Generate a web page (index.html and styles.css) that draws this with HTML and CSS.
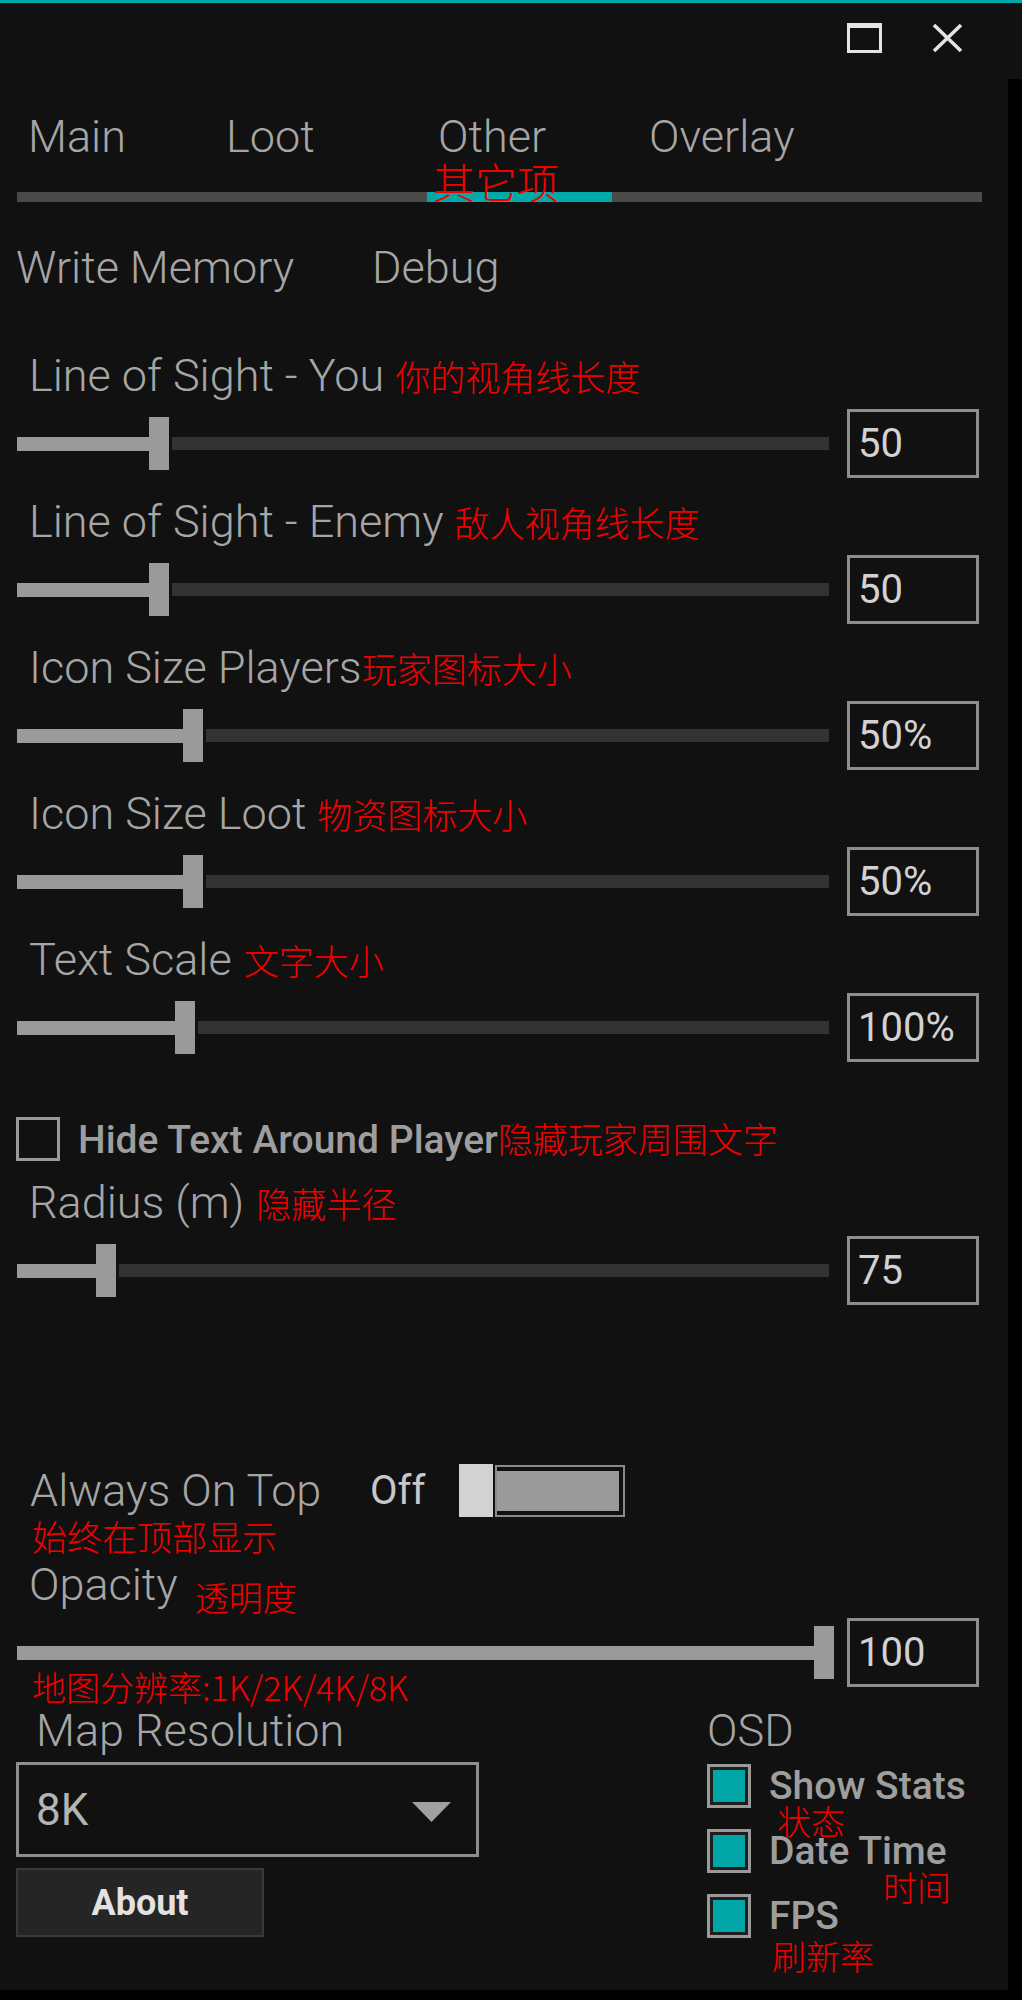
FILE: index.html
```html
<!DOCTYPE html>
<html lang="en">
<head>
<meta charset="utf-8">
<title>Settings - Other</title>
<link rel="stylesheet" href="styles.css">
</head>
<body>
<div class="titlebar">
  <div class="btn-max"></div>
  <svg class="btn-close" width="31" height="30" viewBox="0 0 31 30"><path d="M2 2 L29 28 M29 2 L2 28" stroke="#e4e4e4" stroke-width="3.6" fill="none"/></svg>
</div>
<div class="panel">
  <div class="tabs">
    <div class="tab tab-main">Main</div>
    <div class="tab tab-loot">Loot</div>
    <div class="tab tab-other">Other<span class="note note-tab">其它项</span></div>
    <div class="tab tab-overlay">Overlay</div>
  </div>
  <div class="tabtrack"><div class="tabind"></div></div>
  <div class="subtabs"><span class="subtab-write">Write Memory</span><span>Debug</span></div>

  <div class="setting first">
    <div class="label">Line of Sight - You <span class="note">你的视角线长度</span></div>
    <div class="row">
      <div class="slider"><div class="fill" style="width:132px"></div><div class="thumb"></div><div class="rest"></div></div>
      <div class="numbox">50</div>
    </div>
  </div>
  <div class="setting">
    <div class="label">Line of Sight - Enemy <span class="note">敌人视角线长度</span></div>
    <div class="row">
      <div class="slider"><div class="fill" style="width:132px"></div><div class="thumb"></div><div class="rest"></div></div>
      <div class="numbox">50</div>
    </div>
  </div>
  <div class="setting">
    <div class="label">Icon Size Players<span class="note">玩家图标大小</span></div>
    <div class="row">
      <div class="slider"><div class="fill" style="width:166px"></div><div class="thumb"></div><div class="rest"></div></div>
      <div class="numbox">50%</div>
    </div>
  </div>
  <div class="setting">
    <div class="label">Icon Size Loot <span class="note">物资图标大小</span></div>
    <div class="row">
      <div class="slider"><div class="fill" style="width:166px"></div><div class="thumb"></div><div class="rest"></div></div>
      <div class="numbox">50%</div>
    </div>
  </div>
  <div class="setting">
    <div class="label">Text Scale<span class="note gap-s">文字大小</span></div>
    <div class="row">
      <div class="slider"><div class="fill" style="width:158px"></div><div class="thumb"></div><div class="rest"></div></div>
      <div class="numbox">100%</div>
    </div>
  </div>

  <div class="checkrow">
    <div class="cb"></div>
    <div class="cb-text">Hide Text Around Player<span class="note">隐藏玩家周围文字</span></div>
  </div>
  <div class="setting radius">
    <div class="label">Radius (m)<span class="note gap-s">隐藏半径</span></div>
    <div class="row">
      <div class="slider"><div class="fill" style="width:79px"></div><div class="thumb"></div><div class="rest"></div></div>
      <div class="numbox">75</div>
    </div>
  </div>

  <div class="toprow">
    <span class="top-label">Always On Top</span>
    <span class="top-off">Off</span>
    <div class="toggle"><div class="knob"></div><div class="ttrack"><div class="tfill"></div></div></div>
  </div>
  <div class="note note-block">始终在顶部显示</div>
  <div class="setting opacity">
    <div class="label">Opacity<span class="note note-low">透明度</span></div>
    <div class="row">
      <div class="slider"><div class="fill" style="width:797px"></div><div class="thumb"></div></div>
      <div class="numbox">100</div>
    </div>
  </div>
  <div class="note note-block note-map">地图分辨率:1K/2K/4K/8K</div>

  <div class="bottom">
    <div class="col-left">
      <div class="map-label">Map Resolution</div>
      <div class="select">
        <span class="select-value">8K</span>
        <svg class="select-arrow" width="39" height="20" viewBox="0 0 39 20"><polygon points="0,0 39,0 19.5,20" fill="#a0a0a0"/></svg>
      </div>
      <div class="about">About</div>
    </div>
    <div class="col-right">
      <div class="osd-label">OSD</div>
      <div class="osd-row r1">
        <div class="cb checked"><div class="cb-fill"></div></div>
        <div class="osd-text">Show Stats</div>
        <span class="note osd-note n1">状态</span>
      </div>
      <div class="osd-row r2">
        <div class="cb checked"><div class="cb-fill"></div></div>
        <div class="osd-text">Date Time</div>
        <span class="note osd-note n2">时间</span>
      </div>
      <div class="osd-row r3">
        <div class="cb checked"><div class="cb-fill"></div></div>
        <div class="osd-text">FPS</div>
        <span class="note osd-note n3">刷新率</span>
      </div>
    </div>
  </div>
</div>
</body>
</html>
```

FILE: styles.css
```css
* { box-sizing: border-box; }
html, body { margin: 0; padding: 0; }
body {
  background: #000;
  width: 1022px;
  height: 2000px;
  overflow: hidden;
  font-family: Roboto, "Noto Sans", sans-serif;
  color: #a6a6a6;
}

.titlebar {
  height: 79px;
  background: #111;
  border-top: 3px solid #00a8a8;
  display: flex;
  justify-content: flex-end;
  align-items: flex-start;
  padding: 20px 59px 0 0;
  gap: 50px;
}
.btn-max {
  width: 35px;
  height: 30px;
  border: 3px solid #e4e4e4;
  border-top-width: 5px;
}
.btn-close { display: block; }

.panel {
  width: 1008px;
  height: 1911px;
  background: #111;
  padding-top: 31px;
}

.note {
  color: #f20000;
  font-family: "Noto Sans CJK SC", "Noto Sans", sans-serif;
  font-size: 35px;
  font-weight: 300;
}

.tabs {
  display: flex;
  padding-left: 28px;
  font-size: 45px;
  line-height: 53px;
  font-weight: 300;
}
.tab { position: relative; white-space: nowrap; }
.tab-main { width: 198px; }
.tab-loot { width: 212px; }
.tab-other { width: 211px; }
.note-tab {
  position: absolute;
  left: -5px;
  top: 50px;
  font-size: 42px;
  line-height: 42px;
}
.tabtrack {
  margin: 29px 0 0 17px;
  width: 965px;
  height: 10px;
  background: #4a4a4a;
}
.tabind {
  margin-left: 410px;
  width: 185px;
  height: 10px;
  background: #00a9a9;
}
.subtabs {
  margin-top: 39px;
  display: flex;
  padding-left: 16px;
  font-size: 45px;
  line-height: 53px;
  font-weight: 300;
}
.subtab-write { width: 356px; }

.setting { margin-top: 17px; }
.setting.first { margin-top: 55px; }
.label {
  padding-left: 29px;
  height: 53px;
  font-size: 45px;
  line-height: 53px;
  font-weight: 300;
  white-space: nowrap;
}
.gap-s { margin-left: 12px; }
.row {
  margin-top: 7px;
  height: 69px;
  display: flex;
  align-items: center;
}
.slider {
  margin-left: 17px;
  width: 816px;
  display: flex;
  align-items: center;
}
.fill { height: 14px; background: #9a9a9a; flex: none; }
.thumb { width: 20px; height: 53px; background: #9a9a9a; flex: none; }
.rest { flex: 1; height: 13px; background: #333; margin: 0 4px 0 3px; }
.numbox {
  margin-left: 14px;
  width: 132px;
  height: 69px;
  border: 3px solid #8e8e8e;
  display: flex;
  align-items: center;
  padding-left: 8px;
  font-size: 40px;
  color: #d2d2d2;
}

.checkrow {
  margin-top: 55px;
  height: 44px;
  display: flex;
  align-items: center;
}
.cb {
  width: 44px;
  height: 44px;
  border: 3px solid #9a9a9a;
  flex: none;
}
.checkrow .cb { margin-left: 16px; }
.cb-text {
  margin-left: 18px;
  font-size: 39px;
  line-height: 44px;
  font-weight: 500;
  color: #9e9e9e;
  white-space: nowrap;
}
.setting.radius { margin-top: 15px; }

.toprow {
  margin-top: 159px;
  height: 53px;
  display: flex;
  align-items: center;
}
.top-label {
  width: 370px;
  padding-left: 30px;
  font-size: 45px;
  line-height: 53px;
  font-weight: 300;
  white-space: nowrap;
}
.top-off {
  width: 89px;
  font-size: 40px;
  font-weight: 400;
  color: #c8c8c8;
}
.toggle { display: flex; width: 166px; height: 53px; }
.knob { width: 34px; height: 53px; background: #d2d2d2; }
.ttrack {
  flex: 1;
  margin: 1px 0 0 2px;
  border: 2px solid #8a8a8a;
  padding: 4px 4px 4px 0;
}
.tfill { height: 100%; background: #9a9a9a; }

.note-block {
  display: block;
  padding-left: 32px;
  line-height: 35px;
  height: 35px;
  white-space: nowrap;
}
.toprow + .note-block { margin-top: 1px; }
.setting.opacity { margin-top: 5px; }
.note-low { font-size: 34px; margin-left: 17px; vertical-align: -11px; }
.note-map { margin-top: -18px; font-size: 34px; }

.bottom { display: flex; }
.col-left { width: 707px; padding-left: 16px; }
.map-label {
  padding-left: 20px;
  font-size: 45px;
  line-height: 53px;
  font-weight: 300;
}
.select {
  margin-top: 5px;
  width: 463px;
  height: 95px;
  border: 3px solid #8e8e8e;
  display: flex;
  align-items: center;
  justify-content: space-between;
  padding: 0 25px 0 17px;
}
.select-value { font-size: 44px; color: #b4b4b4; }
.select-arrow { display: block; margin-top: 4px; }
.about {
  margin-top: 11px;
  width: 248px;
  height: 69px;
  background: #252525;
  border: 2px solid #3a3a3a;
  display: flex;
  align-items: center;
  justify-content: center;
  font-size: 36px;
  font-weight: 700;
  color: #e2e2e2;
}
.col-right { flex: 1; }
.osd-label {
  font-size: 45px;
  line-height: 53px;
  font-weight: 300;
}
.osd-row {
  position: relative;
  height: 44px;
  display: flex;
  align-items: center;
  margin-top: 21px;
}
.osd-row.r1 { margin-top: 7px; }
.cb.checked { padding: 3px; background: #1e1e1e; }
.cb-fill { width: 100%; height: 100%; background: #00a6a6; }
.osd-text {
  margin-left: 18px;
  font-size: 39px;
  line-height: 38px;
  font-weight: 500;
  color: #9e9e9e;
  white-space: nowrap;
}
.osd-note {
  position: absolute;
  font-size: 34px;
  line-height: 28px;
  white-space: nowrap;
}
.n1 { left: 70px; top: 43px; }
.n2 { left: 176px; top: 44px; }
.n3 { left: 65px; top: 48px; }
```
